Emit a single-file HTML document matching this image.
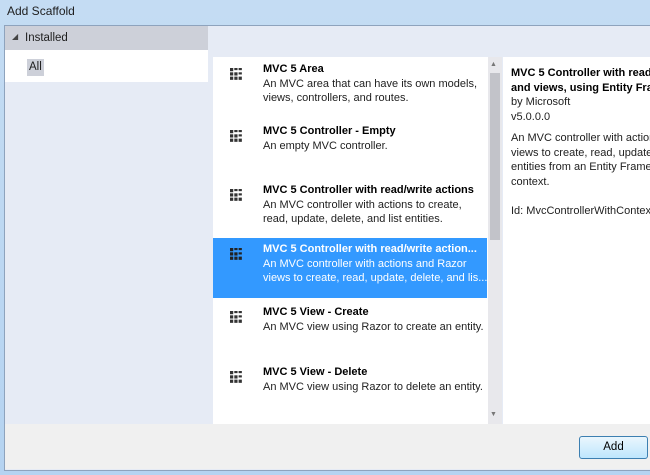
<html><head><style>
body{margin:0;width:650px;height:475px;overflow:hidden;background:linear-gradient(#c4dcf3,#b5d3f1);font-family:"Liberation Sans",sans-serif;font-size:11px;position:relative}
div{position:absolute;box-sizing:border-box}
.t{font-weight:bold;color:#000}
.row{left:213px;width:274px;height:60px}
.row .tx{left:50px;top:4px;line-height:14.5px;white-space:nowrap;color:#1e1e1e}
.ic{position:absolute;left:17px;top:10px;width:14px;height:14px}
</style></head><body>
<div style="left:7px;top:4px;font-size:12px;color:#1e1e1e">Add Scaffold</div>
<div style="left:4px;top:25px;width:650px;height:446px;background:#e6ebf5;border:1px solid #8ea3bd;border-right:none"></div>
<div style="left:5px;top:26px;width:203px;height:24px;background:#cdd0d9"></div>
<div style="left:12px;top:32px;font-size:8px;color:#444">◢</div>
<div style="left:25px;top:32px;color:#1e1e1e;font-size:11.5px">Installed</div>
<div style="left:5px;top:50px;width:203px;height:32px;background:#fff"></div>
<div style="left:27px;top:59px;width:17px;height:17px;background:#cdd0d9"></div>
<div style="left:29px;top:61px;color:#1e1e1e;font-size:11.5px">All</div>
<div style="left:213px;top:57px;width:275px;height:367px;background:#fff"></div>
<div style="left:503px;top:57px;width:147px;height:367px;background:#fff"></div>
<div style="left:488px;top:57px;width:14px;height:367px;background:#e8e8ec"></div>
<div style="left:490px;top:73px;width:10px;height:167px;background:#c2c3c9"></div>
<div style="left:490px;top:61px;font-size:7px;color:#777">▲</div>
<div style="left:490px;top:411px;font-size:7px;color:#777">▼</div>
<div style="left:5px;top:424px;width:645px;height:45px;background:#f0f0f0"></div>
<div style="left:579px;top:436px;width:69px;height:23px;border:1px solid #3c7fb1;border-radius:3px;background:linear-gradient(#eaf6fd,#bee6fd);text-align:center;line-height:21px;color:#000;font-size:11.5px">Add</div>

<div class="row" style="top:58px"><svg class="ic" viewBox="0 0 13 13"><g fill="#333"><rect x="0" y="0" width="3" height="3"/><rect x="4" y="0" width="3" height="2"/><rect x="8" y="0" width="3" height="2"/><rect x="0" y="4" width="3" height="3"/><rect x="4" y="4" width="3" height="3"/><rect x="8" y="4" width="3" height="2"/><rect x="0" y="8" width="3" height="3"/><rect x="4" y="8" width="3" height="3"/><rect x="8" y="8" width="3" height="3"/></g></svg><div class="tx"><span class="t">MVC 5 Area</span><br>An MVC area that can have its own models,<br>views, controllers, and routes.</div></div>
<div class="row" style="top:120px"><svg class="ic" viewBox="0 0 13 13"><g fill="#333"><rect x="0" y="0" width="3" height="3"/><rect x="4" y="0" width="3" height="2"/><rect x="8" y="0" width="3" height="2"/><rect x="0" y="4" width="3" height="3"/><rect x="4" y="4" width="3" height="3"/><rect x="8" y="4" width="3" height="2"/><rect x="0" y="8" width="3" height="3"/><rect x="4" y="8" width="3" height="3"/><rect x="8" y="8" width="3" height="3"/></g></svg><div class="tx"><span class="t">MVC 5 Controller - Empty</span><br>An empty MVC controller.</div></div>
<div class="row" style="top:179px"><svg class="ic" viewBox="0 0 13 13"><g fill="#333"><rect x="0" y="0" width="3" height="3"/><rect x="4" y="0" width="3" height="2"/><rect x="8" y="0" width="3" height="2"/><rect x="0" y="4" width="3" height="3"/><rect x="4" y="4" width="3" height="3"/><rect x="8" y="4" width="3" height="2"/><rect x="0" y="8" width="3" height="3"/><rect x="4" y="8" width="3" height="3"/><rect x="8" y="8" width="3" height="3"/></g></svg><div class="tx"><span class="t">MVC 5 Controller with read/write actions</span><br>An MVC controller with actions to create,<br>read, update, delete, and list entities.</div></div>
<div class="row" style="top:238px;background:#3399ff"><svg class="ic" viewBox="0 0 13 13"><g fill="#222"><rect x="0" y="0" width="3" height="3"/><rect x="4" y="0" width="3" height="2"/><rect x="8" y="0" width="3" height="2"/><rect x="0" y="4" width="3" height="3"/><rect x="4" y="4" width="3" height="3"/><rect x="8" y="4" width="3" height="2"/><rect x="0" y="8" width="3" height="3"/><rect x="4" y="8" width="3" height="3"/><rect x="8" y="8" width="3" height="3"/></g></svg><div class="tx" style="color:#fff"><span class="t" style="color:#fff">MVC 5 Controller with read/write action...</span><br>An MVC controller with actions and Razor<br>views to create, read, update, delete, and lis...</div></div>
<div class="row" style="top:301px"><svg class="ic" viewBox="0 0 13 13"><g fill="#333"><rect x="0" y="0" width="3" height="3"/><rect x="4" y="0" width="3" height="2"/><rect x="8" y="0" width="3" height="2"/><rect x="0" y="4" width="3" height="3"/><rect x="4" y="4" width="3" height="3"/><rect x="8" y="4" width="3" height="2"/><rect x="0" y="8" width="3" height="3"/><rect x="4" y="8" width="3" height="3"/><rect x="8" y="8" width="3" height="3"/></g></svg><div class="tx"><span class="t">MVC 5 View - Create</span><br>An MVC view using Razor to create an entity.</div></div>
<div class="row" style="top:361px"><svg class="ic" viewBox="0 0 13 13"><g fill="#333"><rect x="0" y="0" width="3" height="3"/><rect x="4" y="0" width="3" height="2"/><rect x="8" y="0" width="3" height="2"/><rect x="0" y="4" width="3" height="3"/><rect x="4" y="4" width="3" height="3"/><rect x="8" y="4" width="3" height="2"/><rect x="0" y="8" width="3" height="3"/><rect x="4" y="8" width="3" height="3"/><rect x="8" y="8" width="3" height="3"/></g></svg><div class="tx"><span class="t">MVC 5 View - Delete</span><br>An MVC view using Razor to delete an entity.</div></div>

<div style="left:511px;top:66px;line-height:14.5px;white-space:nowrap;color:#1e1e1e;width:139px;overflow:hidden"><span class="t">MVC 5 Controller with read/write actions<br>and views, using Entity Framework</span><br>by Microsoft<br>v5.0.0.0<br><div style="position:static;height:7px"></div>An MVC controller with actions and<br>views to create, read, update, delete<br>entities from an Entity Framework<br>context.<br><br>Id: MvcControllerWithContext</div>
</body></html>
